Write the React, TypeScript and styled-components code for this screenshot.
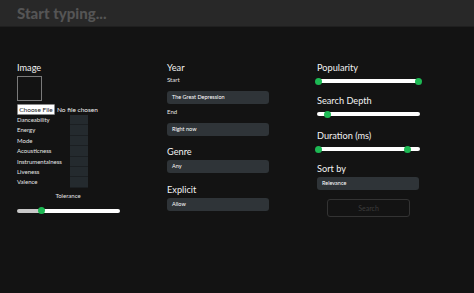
import React from 'react';
import styled, { createGlobalStyle } from 'styled-components';

const GlobalStyle = createGlobalStyle`
  html, body {
    margin: 0;
    padding: 0;
    background: #131313;
    font-family: Lato, "Open Sans", sans-serif;
    color: #ffffff;
  }
  * { box-sizing: border-box; }
`;

const Page = styled.div`
  width: 474px;
  height: 293px;
  background: #131313;
  overflow: hidden;
`;

const Header = styled.div`
  height: 27px;
  background: #282828;
  border-bottom: 1px solid #1f1f1f;
  display: flex;
  align-items: center;
  padding: 0 17px;
`;

const SearchInput = styled.input`
  flex: 1;
  background: transparent;
  border: none;
  outline: none;
  padding: 0;
  font-family: Lato, sans-serif;
  font-weight: 900;
  font-size: 15px;
  color: #fff;
  &::placeholder { color: #555555; }
`;

const Main = styled.div`
  display: flex;
  padding: 35px 17px 0;
`;

const Column = styled.div`
  width: 150px;
  flex-shrink: 0;
  display: flex;
  flex-direction: column;
`;

const Title = styled.div<{ $mt?: number }>`
  font-size: 9.2px;
  line-height: 12px;
  height: 12px;
  margin-top: ${(p) => p.$mt ?? 0}px;
  color: #f2f2f2;
`;

const SmallLabel = styled.div<{ $mt?: number }>`
  font-size: 6px;
  line-height: 8px;
  height: 8px;
  margin-top: ${(p) => p.$mt ?? 0}px;
  color: #e6e6e6;
`;

const ImageBox = styled.div`
  width: 25px;
  height: 25px;
  border: 1px solid #7a7a7a;
  margin-top: 2px;
`;

const FileRow = styled.div`
  display: flex;
  align-items: center;
  gap: 2px;
  margin-top: 3px;
  height: 11px;
`;

const FileButton = styled.button`
  height: 11px;
  width: 38px;
  padding: 0;
  background: #ffffff;
  border: 1px solid #8a8a8a;
  border-radius: 1px;
  font-family: Lato, sans-serif;
  font-size: 6.5px;
  color: #222;
`;

const FileText = styled.span`
  font-size: 6.5px;
  color: #f0f0f0;
`;

const FeatureGrid = styled.div`
  display: grid;
  grid-template-columns: 53px 18px;
  grid-auto-rows: 10.4px;
`;

const FeatureLabel = styled.div`
  font-size: 6px;
  line-height: 10.4px;
  color: #e6e6e6;
  white-space: nowrap;
`;

const FeatureInput = styled.div`
  background: #242a2e;
  border-bottom: 1px solid #1b1f22;
`;

const Centered = styled.div`
  width: 102px;
  text-align: center;
  font-size: 6px;
  line-height: 8px;
  margin-top: 4px;
  color: #e6e6e6;
`;

const Select = styled.div<{ $mt?: number }>`
  width: 102px;
  height: 13px;
  margin-top: ${(p) => p.$mt ?? 0}px;
  background: #2f3438;
  border-radius: 3px;
  padding-left: 5px;
  font-size: 5.5px;
  line-height: 13px;
  color: #ffffff;
`;

const SliderWrap = styled.div<{ $mt?: number }>`
  position: relative;
  width: 103px;
  height: 8px;
  margin-top: ${(p) => p.$mt ?? 0}px;
`;

const Track = styled.div<{ $fill: string }>`
  position: absolute;
  left: 0;
  right: 0;
  top: 2px;
  height: 4px;
  border-radius: 2px;
  background: ${(p) => p.$fill};
`;

const Thumb = styled.div`
  position: absolute;
  top: 0.5px;
  width: 7px;
  height: 7px;
  margin-left: -3.5px;
  border-radius: 50%;
  background: #1db954;
`;

const SearchButton = styled.button`
  width: 83px;
  height: 18px;
  margin: 9px 0 0 10px;
  background: transparent;
  border: 1px solid #333333;
  border-radius: 3px;
  font-family: Lato, sans-serif;
  font-size: 7px;
  color: #3c3c3c;
`;

function Slider({ thumbs, mt, grey }: { thumbs: number[]; mt?: number; grey?: number }) {
  const fill =
    grey !== undefined
      ? `linear-gradient(to right, #c8c8c8 ${grey}%, #ffffff ${grey}%)`
      : '#ffffff';
  return (
    <SliderWrap $mt={mt}>
      <Track $fill={fill} />
      {thumbs.map((t) => (
        <Thumb key={t} style={{ left: `${t}%` }} />
      ))}
    </SliderWrap>
  );
}

const features = [
  'Danceability',
  'Energy',
  'Mode',
  'Acousticness',
  'Instrumentalness',
  'Liveness',
  'Valence',
];

export default function App() {
  return (
    <Page>
      <GlobalStyle />
      <Header>
        <SearchInput placeholder="Start typing..." />
      </Header>
      <Main>
        <Column>
          <Title>Image</Title>
          <ImageBox />
          <FileRow>
            <FileButton>Choose File</FileButton>
            <FileText>No file chosen</FileText>
          </FileRow>
          <FeatureGrid>
            {features.map((f) => (
              <React.Fragment key={f}>
                <FeatureLabel>{f}</FeatureLabel>
                <FeatureInput />
              </React.Fragment>
            ))}
          </FeatureGrid>
          <Centered>Tolerance</Centered>
          <Slider thumbs={[24]} grey={24} mt={7} />
        </Column>
        <Column>
          <Title>Year</Title>
          <SmallLabel $mt={2}>Start</SmallLabel>
          <Select $mt={7}>The Great Depression</Select>
          <SmallLabel $mt={4}>End</SmallLabel>
          <Select $mt={7}>Right now</Select>
          <Title $mt={10}>Genre</Title>
          <Select $mt={2}>Any</Select>
          <Title $mt={11}>Explicit</Title>
          <Select $mt={2}>Allow</Select>
        </Column>
        <Column>
          <Title>Popularity</Title>
          <Slider thumbs={[1, 99]} mt={3} />
          <Title $mt={10}>Search Depth</Title>
          <Slider thumbs={[10]} mt={3} />
          <Title $mt={12}>Duration (ms)</Title>
          <Slider thumbs={[1, 88]} mt={3} />
          <Title $mt={10}>Sort by</Title>
          <Select $mt={2}>Relevance</Select>
          <SearchButton>Search</SearchButton>
        </Column>
      </Main>
    </Page>
  );
}
